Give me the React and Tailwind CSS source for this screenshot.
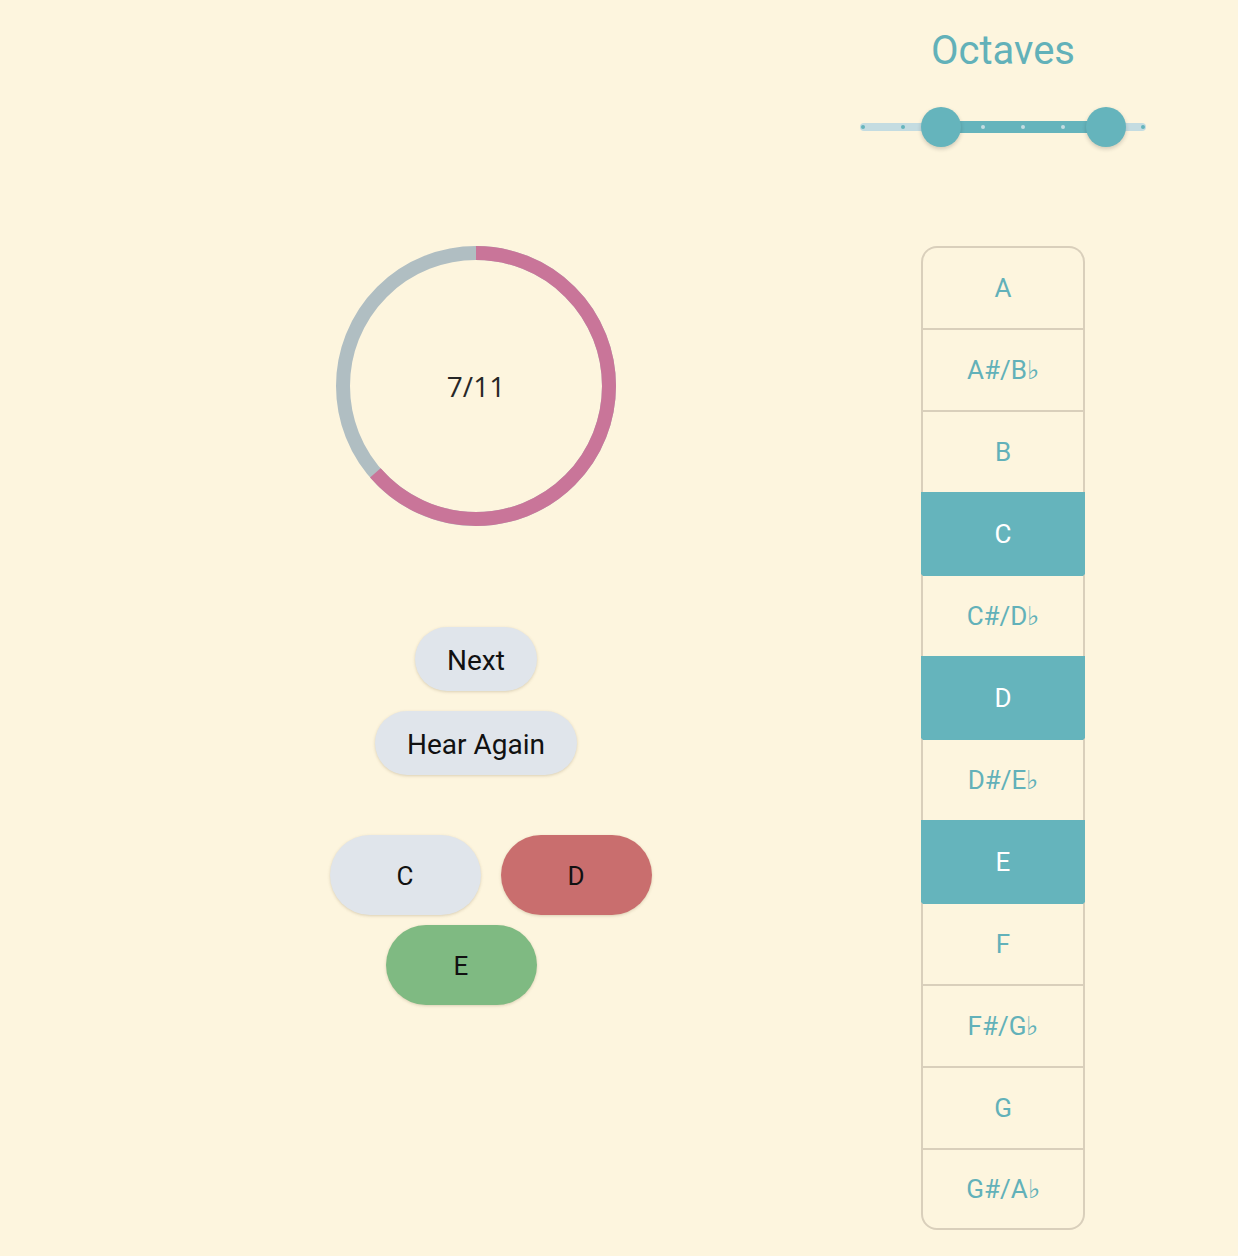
import React from 'react';

const NOTES = ['A', 'A#/B♭', 'B', 'C', 'C#/D♭', 'D', 'D#/E♭', 'E', 'F', 'F#/G♭', 'G', 'G#/A♭'];
const SELECTED = ['C', 'D', 'E'];

function ProgressRing({ done, total }) {
  const r = 133;
  const c = 2 * Math.PI * r;
  const frac = done / total;

  return (
    <div className="relative w-[280px] h-[280px]">
      <svg width="280" height="280" viewBox="0 0 280 280" className="block">
        <circle cx="140" cy="140" r={r} fill="none" stroke="#b0bec2" strokeWidth="14" />
        <circle
          cx="140"
          cy="140"
          r={r}
          fill="none"
          stroke="#c97599"
          strokeWidth="14"
          strokeDasharray={`${c * frac} ${c}`}
          transform="rotate(-90 140 140)"
        />
      </svg>
      <div className="absolute inset-0 flex items-center justify-center">
        <span className="text-[28px] text-[#272727] font-['Open_Sans',sans-serif]">
          {done}/{total}
        </span>
      </div>
    </div>
  );
}

function OctaveSlider() {
  const marks = [0, 1, 2, 3, 4, 5, 6, 7];
  const low = 81; // thumb centres, px from the left of the rail
  const high = 246;

  return (
    <div className="relative w-[286px] h-10">
      <div className="absolute left-0 right-0 top-[16px] h-2 rounded-full bg-[#c4dce1]" />
      <div
        className="absolute top-[14px] h-3 bg-[#65b4bc]"
        style={{ left: low, width: high - low }}
      />
      {marks.map((m) => {
        const x = 3 + m * 40;
        const active = x > low && x < high;
        return (
          <div
            key={m}
            className={`absolute top-[18px] w-1 h-1 rounded-full ${active ? 'bg-[#c4dce1]' : 'bg-[#65b4bc]'}`}
            style={{ left: x - 2 }}
          />
        );
      })}
      {[low, high].map((x) => (
        <div
          key={x}
          className="absolute top-0 w-10 h-10 rounded-full bg-[#65b4bc] shadow-[0_2px_4px_rgba(0,0,0,0.18)]"
          style={{ left: x - 20 }}
        />
      ))}
    </div>
  );
}

function NoteList() {
  return (
    <div className="flex flex-col w-[164px]">
      {NOTES.map((note, i) => {
        const sel = SELECTED.includes(note);
        const prevSel = i > 0 && SELECTED.includes(NOTES[i - 1]);
        const first = i === 0;
        const last = i === NOTES.length - 1;
        return (
          <div
            key={note}
            className={`h-[82px] flex items-center justify-center border-x-2 border-t-2 text-[26px] ${
              sel ? 'bg-[#65b4bc] text-white border-x-[#65b4bc]' : 'text-[#62b1b9] border-x-[#d9cfbb]'
            } ${sel || prevSel ? 'border-t-[#65b4bc]' : 'border-t-[#d9cfbb]'} ${
              first ? 'rounded-t-2xl border-t-[#d9cfbb]' : ''
            } ${last ? 'rounded-b-2xl border-b-2 border-b-[#d9cfbb]' : ''}`}
          >
            {note}
          </div>
        );
      })}
    </div>
  );
}

function PillButton({ children, className }) {
  return (
    <button
      className={`rounded-full shadow-[0_1px_3px_rgba(120,100,60,0.25)] text-[#111] ${className}`}
    >
      {children}
    </button>
  );
}

export default function App() {
  return (
    <div className="min-h-[1256px] bg-[#fdf5de] font-['Roboto',sans-serif] flex px-[92px]">
      <div className="flex-1 flex flex-col items-center pt-[246px]">
        <ProgressRing done={7} total={11} />

        <div className="flex flex-col items-center gap-[20px] mt-[101px]">
          <PillButton className="h-16 px-8 pt-[3px] text-[28px] bg-[#e0e5eb]">Next</PillButton>
          <PillButton className="h-16 px-8 pt-[3px] text-[28px] bg-[#e0e5eb]">Hear Again</PillButton>
        </div>

        <div className="flex flex-col items-center gap-[10px] mt-[60px]">
          <div className="flex gap-5 ml-[29px]">
            <PillButton className="w-[151px] h-20 pt-[2px] text-[26px] bg-[#e0e5eb]">C</PillButton>
            <PillButton className="w-[151px] h-20 pt-[2px] text-[26px] bg-[#c96e6e]">D</PillButton>
          </div>
          <div className="flex mr-[30px]">
            <PillButton className="w-[151px] h-20 pt-[2px] text-[26px] bg-[#7fba82]">E</PillButton>
          </div>
        </div>
      </div>

      <div className="w-[286px] flex flex-col items-center pt-[27px]">
        <h1 className="text-[40px] leading-[48px] text-[#62b1b9]">Octaves</h1>
        <div className="mt-[32px]">
          <OctaveSlider />
        </div>
        <div className="mt-[99px]">
          <NoteList />
        </div>
      </div>
    </div>
  );
}
